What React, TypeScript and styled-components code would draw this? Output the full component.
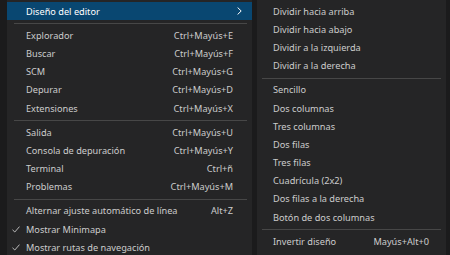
import React from "react";
import styled, { createGlobalStyle } from "styled-components";

const Global = createGlobalStyle`
  html, body { margin: 0; padding: 0; background: #1b1b1c; }
  body { font-family: "Noto Sans", "Open Sans", sans-serif; }
`;

const Page = styled.div`
  width: 450px;
  height: 255px;
  overflow: hidden;
  display: flex;
  align-items: flex-start;
  background: #1b1b1c;
  color: #cccccc;
  font-size: 9.2px;
`;

const Panel = styled.div<{ $w: number; $ml: number }>`
  width: ${(p) => p.$w}px;
  margin-left: ${(p) => p.$ml}px;
  height: 255px;
  background: #252526;
  padding-top: 2px;
  box-sizing: border-box;
  display: flex;
  flex-direction: column;
`;

const Item = styled.div<{ $active?: boolean; $padL: number; $padR: number }>`
  height: 18.2px;
  flex-shrink: 0;
  display: flex;
  align-items: center;
  padding-left: ${(p) => p.$padL}px;
  padding-right: ${(p) => p.$padR}px;
  background: ${(p) => (p.$active ? "#094771" : "transparent")};
  color: ${(p) => (p.$active ? "#ffffff" : "#cccccc")};
  white-space: nowrap;
  position: relative;
`;

const CheckSlot = styled.span`
  position: absolute;
  left: 5px;
  top: 6px;
  width: 8px;
  height: 7px;
  display: flex;
`;

const Label = styled.span`
  flex: 1;
`;

const Shortcut = styled.span`
  color: #cccccc;
`;

const Chevron = styled.span`
  position: absolute;
  right: 10px;
  top: 5px;
  display: flex;
`;

const Separator = styled.div<{ $ml: number; $mr: number }>`
  height: 1px;
  background: #474747;
  margin: 3px ${(p) => p.$mr}px 2px ${(p) => p.$ml}px;
  flex-shrink: 0;
`;

const Check = () => (
  <svg width="8" height="7" viewBox="0 0 8 7">
    <path d="M0.5 3.8 L2.8 6 L7.5 0.6" stroke="#cccccc" strokeWidth="0.9" fill="none" />
  </svg>
);

const Arrow = () => (
  <svg width="5" height="8" viewBox="0 0 5 8">
    <path d="M0.6 0.5 L4.2 4 L0.6 7.5" stroke="#ffffff" strokeWidth="1" fill="none" />
  </svg>
);

type Entry =
  | { sep: true }
  | { sep?: false; label: string; sc?: string; check?: boolean; active?: boolean; sub?: boolean };

const left: Entry[] = [
  { label: "Diseño del editor", active: true, sub: true },
  { sep: true },
  { label: "Explorador", sc: "Ctrl+Mayús+E" },
  { label: "Buscar", sc: "Ctrl+Mayús+F" },
  { label: "SCM", sc: "Ctrl+Mayús+G" },
  { label: "Depurar", sc: "Ctrl+Mayús+D" },
  { label: "Extensiones", sc: "Ctrl+Mayús+X" },
  { sep: true },
  { label: "Salida", sc: "Ctrl+Mayús+U" },
  { label: "Consola de depuración", sc: "Ctrl+Mayús+Y" },
  { label: "Terminal", sc: "Ctrl+ñ" },
  { label: "Problemas", sc: "Ctrl+Mayús+M" },
  { sep: true },
  { label: "Alternar ajuste automático de línea", sc: "Alt+Z" },
  { label: "Mostrar Minimapa", check: true },
  { label: "Mostrar rutas de navegación", check: true },
];

const right: Entry[] = [
  { label: "Dividir hacia arriba" },
  { label: "Dividir hacia abajo" },
  { label: "Dividir a la izquierda" },
  { label: "Dividir a la derecha" },
  { sep: true },
  { label: "Sencillo" },
  { label: "Dos columnas" },
  { label: "Tres columnas" },
  { label: "Dos filas" },
  { label: "Tres filas" },
  { label: "Cuadrícula (2x2)" },
  { label: "Dos filas a la derecha" },
  { label: "Botón de dos columnas" },
  { sep: true },
  { label: "Invertir diseño", sc: "Mayús+Alt+0" },
];

const Menu = ({
  entries,
  padL,
  padR,
  sepL,
  sepR,
}: {
  entries: Entry[];
  padL: number;
  padR: number;
  sepL: number;
  sepR: number;
}) => (
  <>
    {entries.map((e, i) =>
      e.sep ? (
        <Separator key={i} $ml={sepL} $mr={sepR} />
      ) : (
        <Item key={i} $active={e.active} $padL={padL} $padR={padR}>
          {e.check && (
            <CheckSlot>
              <Check />
            </CheckSlot>
          )}
          <Label>{e.label}</Label>
          {e.sc && <Shortcut>{e.sc}</Shortcut>}
          {e.sub && (
            <Chevron>
              <Arrow />
            </Chevron>
          )}
        </Item>
      )
    )}
  </>
);

export default function App() {
  return (
    <>
      <Global />
      <Page>
        <Panel $w={245} $ml={7}>
          <Menu entries={left} padL={19} padR={19} sepL={7} sepR={5} />
        </Panel>
        <Panel $w={189} $ml={5}>
          <Menu entries={right} padL={16} padR={17} sepL={5} sepR={5} />
        </Panel>
      </Page>
    </>
  );
}
